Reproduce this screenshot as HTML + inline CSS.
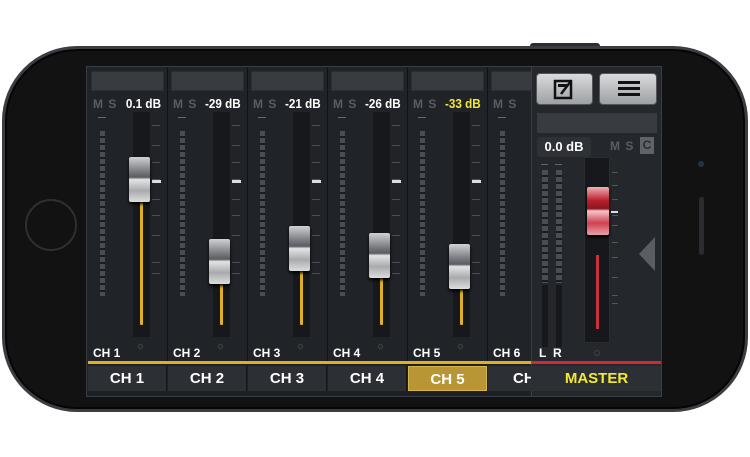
<!DOCTYPE html>
<html><head><meta charset="utf-8"><style>
*{margin:0;padding:0;box-sizing:border-box}
body{width:750px;height:457px;background:#fff;position:relative;overflow:hidden;font-family:"Liberation Sans Narrow","Liberation Sans",sans-serif;font-weight:bold}
.a{position:absolute}
#phone{left:2px;top:46px;width:746px;height:366px;border-radius:75px;background:#121212;border:3px solid #3a3d42;box-shadow:inset 0 0 0 2px #050505}
#screen{left:86px;top:66px;width:576px;height:331px;background:#1d2024;border:1px solid #3a3e44;overflow:hidden}
.strip{top:0;width:80px;height:295px;border-right:1px solid #111417;background:#202327}
.gbox{left:3px;top:4px;width:73px;height:20px;background:#383c40;border:1px solid #2a2d31}
.ms{left:5px;top:30px;font-size:12px;color:#5a5e63;letter-spacing:1px}
.db{right:6px;top:29px;font-size:13px;color:#fff;transform:scaleX(.9);transform-origin:right;white-space:nowrap}
.meter{left:12px;top:64px;width:5px;height:165px;background:repeating-linear-gradient(#4a4e53 0 5px,#1a1c1f 5px 7px)}
.track{left:45px;top:45px;width:17px;height:225px;background:#16181b}
.knob{left:41px;width:21px;height:45px;border-radius:2px;background:linear-gradient(#cfd1d3,#7d8084 30%,#5a5d60 45%,#e3e4e5 50%,#a8abad 75%,#dcdddd);box-shadow:0 2px 3px #000}
.yl{left:52px;width:3px;background:#e0b021;border-radius:1px}
.tick{left:64px;width:8px;height:1px;background:#4b4f54}
.lbl{left:5px;top:279px;font-size:12px;color:#fff;white-space:nowrap}
.tab{top:299px;height:25px;background:#2c3034;border-right:1px solid #15171a;color:#fff;font-size:15px;text-align:center;line-height:25px;white-space:nowrap;overflow:hidden}
.btn{top:6px;height:32px;border-radius:4px;background:linear-gradient(#d8dadc,#9ea1a4);border:1px solid #555}
</style></head><body>
<div class="a" style="left:530px;top:43px;width:70px;height:6px;background:#2a2d31;border-radius:3px"></div>
<div id="phone" class="a"></div>
<div class="a" style="left:25px;top:199px;width:52px;height:52px;border-radius:50%;border:2px solid #2d3033"></div>
<div class="a" style="left:698px;top:161px;width:6px;height:6px;border-radius:50%;background:#243246"></div>
<div class="a" style="left:699px;top:197px;width:5px;height:58px;border-radius:3px;background:#2a2c2f"></div>
<div id="screen" class="a"></div>
<script>
var s=document.getElementById('screen'),h='';
var chs=[['0.1 dB',90],['-29 dB',172],['-21 dB',159],['-26 dB',166],['-33 dB',177],['',0]];
for(var i=0;i<6;i++){var x=1+i*80,c=chs[i];
h+='<div class="a strip" style="left:'+x+'px">';
h+='<div class="a gbox"></div><div class="a ms">M S</div>';
if(c[0])h+='<div class="a db" style="color:'+(i==4?'#f3e834':'#fff')+'">'+c[0]+'</div>';
h+='<div class="a" style="left:10px;top:50px;width:8px;height:1px;background:#666"></div>';
h+='<div class="a meter"></div>';
if(i<5){h+='<div class="a track"></div>';
[58,78,95,112,132,148,168,195,206].forEach(function(t){h+='<div class="a tick" style="top:'+t+'px"></div>'});
h+='<div class="a tick" style="top:113px;height:3px;background:#ddd;width:9px"></div>';
h+='<div class="a yl" style="top:'+(c[1]+40)+'px;height:'+(258-c[1]-40)+'px"></div>';
h+='<div class="a knob" style="top:'+c[1]+'px"></div>';
h+='<div class="a" style="left:50px;top:277px;width:5px;height:5px;border-radius:50%;border:1px solid #444"></div>';}
h+='<div class="a lbl">CH '+(i+1)+'</div></div>';}
h+='<div class="a" style="left:1px;top:294px;width:443px;height:3px;background:#e0b021"></div>';
for(var i=0;i<6;i++){var x=1+i*80;var w=i==5?44:79;
h+='<div class="a tab" style="left:'+x+'px;width:'+w+'px;'+(i==4?'background:#b89636;border:1px solid #d9b64a;':'')+(i==5?'text-align:left;padding-left:25px;':'')+'">CH '+(i+1)+'</div>';}
h+='<div class="a" style="left:444px;top:0;width:131px;height:329px;background:#24272b;border-left:1px solid #3a3e44"></div>';
h+='<div class="a btn" style="left:449px;width:57px"></div><div class="a btn" style="left:512px;width:58px"></div>';
h+='<svg class="a" style="left:466px;top:11px" width="22" height="22" viewBox="0 0 22 22"><rect x="2" y="3" width="16" height="17" fill="none" stroke="#111" stroke-width="2.5"/><rect x="5" y="6" width="10" height="3" fill="#111"/><path d="M8 16 L18 3" stroke="#111" stroke-width="2.5"/></svg>';
h+='<div class="a" style="left:531px;top:14px;width:22px;height:3px;background:#111;box-shadow:0 6px 0 #111,0 12px 0 #111"></div>';
h+='<div class="a" style="left:450px;top:46px;width:120px;height:20px;background:#383c40"></div>';
h+='<div class="a" style="left:450px;top:70px;width:54px;height:20px;border-radius:4px;background:#2e3236;color:#fff;font-size:13px;text-align:center;line-height:20px">0.0 dB</div>';
h+='<div class="a" style="left:523px;top:72px;font-size:12px;color:#5a5e63;letter-spacing:1px">M S</div>';
h+='<div class="a" style="left:553px;top:70px;width:14px;height:17px;background:#5f6368;color:#2a2d30;font-size:12px;text-align:center;line-height:17px">C</div>';
[454,468].forEach(function(x){h+='<div class="a" style="left:'+x+'px;top:97px;width:7px;height:1px;background:#666"></div><div class="a" style="left:'+(x+1)+'px;top:103px;width:6px;height:113px;background:repeating-linear-gradient(#4a4e53 0 5px,#1a1c1f 5px 7px)"></div><div class="a" style="left:'+(x+1)+'px;top:218px;width:6px;height:62px;background:#16181b"></div>'});
h+='<div class="a" style="left:452px;top:279px;color:#fff;font-size:12px">L&nbsp;&nbsp;R</div>';
h+='<div class="a" style="left:497px;top:90px;width:26px;height:186px;background:#16181b;border:1px solid #2a2d30"></div>';
h+='<div class="a" style="left:509px;top:188px;width:3px;height:74px;background:#c8303a"></div>';
h+='<div class="a" style="left:500px;top:120px;width:22px;height:48px;border-radius:2px;background:linear-gradient(#f0b0b5,#b8202c 28%,#8a1520 45%,#f4c6ca 50%,#d04050 75%,#e8a0a8);box-shadow:0 2px 3px #000"></div>';
[95,108,122,138,148,165,180,200,218,226].forEach(function(t){h+='<div class="a" style="left:525px;top:'+(t+10)+'px;width:6px;height:1px;background:#555"></div>'});
h+='<div class="a" style="left:524px;top:144px;width:7px;height:2px;background:#ddd"></div>';
h+='<div class="a" style="left:507px;top:283px;width:6px;height:6px;border-radius:50%;border:1px solid #444"></div>';
h+='<div class="a" style="left:552px;top:170px;width:0;height:0;border-top:17px solid transparent;border-bottom:17px solid transparent;border-right:16px solid #5a5e63"></div>';
h+='<div class="a" style="left:444px;top:294px;width:131px;height:3px;background:#d02a35"></div>';
h+='<div class="a tab" style="left:444px;width:131px;color:#f3e834;border:none">MASTER</div>';
s.innerHTML=h;
</script>
</body></html>
